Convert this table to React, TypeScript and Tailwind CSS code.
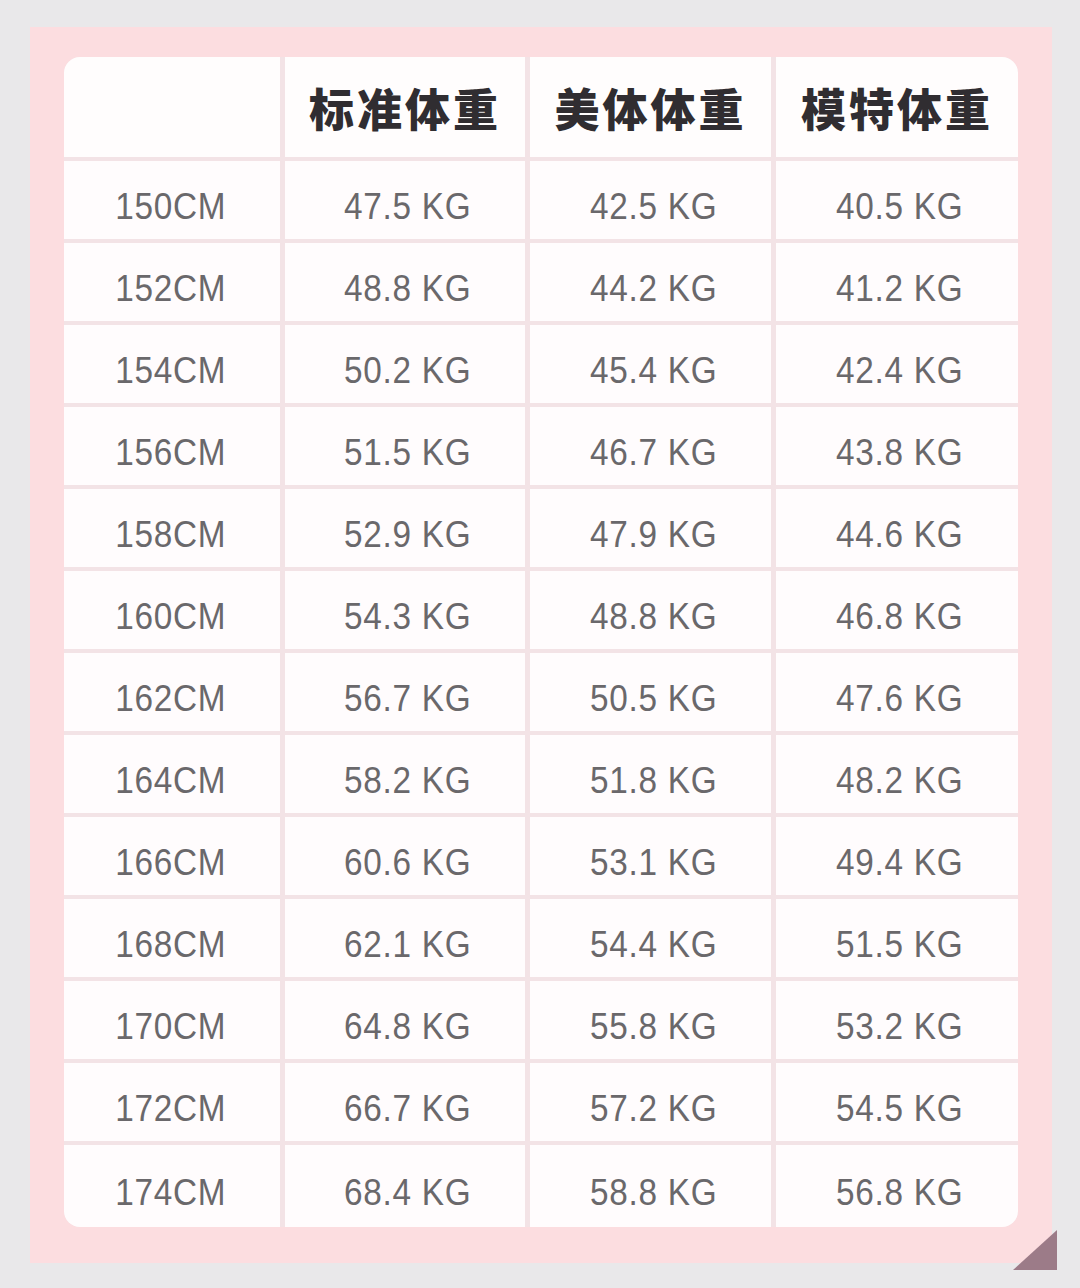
import React from 'react';

const rows: [string, string, string, string][] = [
  ['150CM', '47.5 KG', '42.5 KG', '40.5 KG'],
  ['152CM', '48.8 KG', '44.2 KG', '41.2 KG'],
  ['154CM', '50.2 KG', '45.4 KG', '42.4 KG'],
  ['156CM', '51.5 KG', '46.7 KG', '43.8 KG'],
  ['158CM', '52.9 KG', '47.9 KG', '44.6 KG'],
  ['160CM', '54.3 KG', '48.8 KG', '46.8 KG'],
  ['162CM', '56.7 KG', '50.5 KG', '47.6 KG'],
  ['164CM', '58.2 KG', '51.8 KG', '48.2 KG'],
  ['166CM', '60.6 KG', '53.1 KG', '49.4 KG'],
  ['168CM', '62.1 KG', '54.4 KG', '51.5 KG'],
  ['170CM', '64.8 KG', '55.8 KG', '53.2 KG'],
  ['172CM', '66.7 KG', '57.2 KG', '54.5 KG'],
  ['174CM', '68.4 KG', '58.8 KG', '56.8 KG'],
];

const headers = ['标准体重', '美体体重', '模特体重'];

export default function App() {
  return (
    <div className="relative w-[1080px] h-[1288px] bg-[#e9e8ea] pt-[27px] pl-[30px] font-['Liberation_Sans',Arial,sans-serif]">
      <div className="w-[1022px] h-[1236px] bg-[#fcdde0] pt-[30px] pl-[34px]">
        <div className="w-[954px] rounded-[16px] overflow-hidden bg-[#f3e3e6] grid grid-cols-[216px_240px_241px_242px] gap-x-[5px] gap-y-[4px]">
          <div className="h-[100px] bg-[#fffdfd]" />
          {headers.map((h) => (
            <div
              key={h}
              className="h-[100px] pt-[2px] bg-[#fffdfd] flex items-center justify-center text-[45px] font-black tracking-[3px] text-[#302d31] font-['Noto_Sans_CJK_SC','Noto_Sans',sans-serif]"
            >
              {h}
            </div>
          ))}
          {rows.map((r, i) =>
            r.map((c, j) => (
              <div
                key={`${i}-${j}`}
                className={`${i === rows.length - 1 ? 'h-[82px]' : 'h-[78px]'} pt-[14px] bg-[#fffcfd] flex items-center justify-center text-[37px] text-[#6a686b] ${j === 0 ? 'pr-[2px]' : 'pl-[6px]'}`}
              >
                <span className="inline-block scale-x-90 whitespace-nowrap tracking-[0.8px]">{c}</span>
              </div>
            ))
          )}
        </div>
      </div>
      <svg className="absolute left-[1013px] top-[1230px]" width="44" height="40" viewBox="0 0 44 40">
        <polygon points="44,0 44,40 0,40" fill="#9c7b88" />
      </svg>
    </div>
  );
}
